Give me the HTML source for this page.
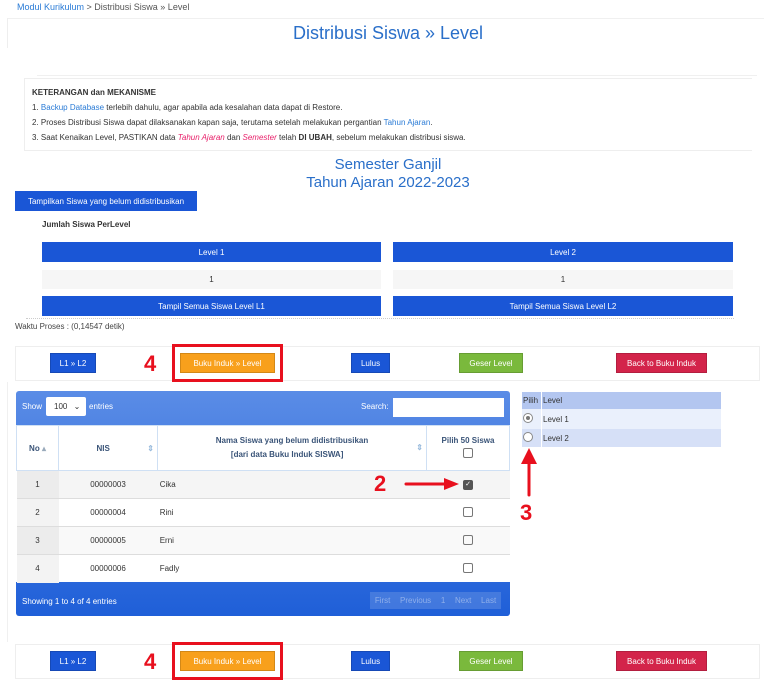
<!DOCTYPE html>
<html><head><meta charset="utf-8"><style>
*{margin:0;padding:0;box-sizing:border-box}
body{width:768px;height:681px;background:#fff;font-family:"Liberation Sans",sans-serif;position:relative;overflow:hidden;color:#333}
.a{position:absolute}
.c{display:flex;align-items:center;justify-content:center}
.bb{background:#1a56d6;color:#fff;font-size:8px}
.btn{position:absolute;color:#fff;font-size:8px;display:flex;align-items:center;justify-content:center;border:1px solid rgba(0,0,0,.15)}
.num{position:absolute;color:#e8101e;font-weight:bold;font-size:22px;font-family:"Liberation Sans",sans-serif}
.redbox{position:absolute;border:3px solid #e8101e}
td,th{font-size:8px}
</style></head><body>
<div class="a" style="left:8px;top:18px;width:756px;height:1px;background:#f0f0f0"></div>
<div class="a" style="left:7px;top:18px;width:1px;height:30px;background:#eee"></div>
<div class="a" style="left:17px;top:2px;font-size:9px;color:#555"><span style="color:#2a7bd6">Modul Kurikulum</span> &gt; Distribusi Siswa » Level</div>
<div class="a" style="left:0;width:776px;top:23px;text-align:center;font-size:18px;color:#2a6fc9">Distribusi Siswa » Level</div>
<div class="a" style="left:37px;top:75px;width:720px;height:1px;background:#f0f0f0"></div>
<div class="a" style="left:24px;top:78px;width:728px;height:73px;border:1px solid #eee;border-right:none"></div>
<div class="a" style="left:32px;top:85px;font-size:8px;line-height:15px;color:#333">
<b>KETERANGAN dan MEKANISME</b><br>
1. <span style="color:#2a7bd6">Backup Database</span> terlebih dahulu, agar apabila ada kesalahan data dapat di Restore.<br>
2. Proses Distribusi Siswa dapat dilaksanakan kapan saja, terutama setelah melakukan pergantian <span style="color:#2a7bd6">Tahun Ajaran</span>.<br>
3. Saat Kenaikan Level, PASTIKAN data <i style="color:#e8206a">Tahun Ajaran</i> dan <i style="color:#e8206a">Semester</i> telah <b>DI UBAH</b>, sebelum melakukan distribusi siswa.</div>
<div class="a" style="left:0;width:776px;top:156px;text-align:center;font-size:15px;line-height:18px;color:#2a6fc9">Semester Ganjil<br>Tahun Ajaran 2022-2023</div>
<div class="a c bb" style="left:15px;top:191px;width:182px;height:20px">Tampilkan Siswa yang belum didistribusikan</div>
<div class="a" style="left:42px;top:220px;font-size:8px;font-weight:bold">Jumlah Siswa PerLevel</div>
<div class="a c bb" style="left:42px;top:242px;width:339px;height:20px">Level 1</div>
<div class="a c bb" style="left:393px;top:242px;width:340px;height:20px">Level 2</div>
<div class="a c" style="left:42px;top:270px;width:339px;height:19px;background:#f6f6f6;font-size:8px">1</div>
<div class="a c" style="left:393px;top:270px;width:340px;height:19px;background:#f6f6f6;font-size:8px">1</div>
<div class="a c bb" style="left:42px;top:296px;width:339px;height:20px">Tampil Semua Siswa Level L1</div>
<div class="a c bb" style="left:393px;top:296px;width:340px;height:20px">Tampil Semua Siswa Level L2</div>
<div class="a" style="left:26px;top:318px;width:708px;height:1px;border-top:1px dotted #ccc"></div>
<div class="a" style="left:15px;top:322px;font-size:8px;color:#444">Waktu Proses : (0,14547 detik)</div>

<div class="a" style="left:15px;top:346px;width:745px;height:35px;border:1px solid #eee"></div>
<div class="btn" style="left:50px;top:353px;width:46px;height:20px;background:#1a56d6">L1 » L2</div>
<div class="num" style="left:144px;top:351px">4</div>
<div class="redbox" style="left:172px;top:344px;width:111px;height:38px"></div>
<div class="btn" style="left:180px;top:353px;width:95px;height:20px;background:#f8a01c">Buku Induk » Level</div>
<div class="btn" style="left:351px;top:353px;width:39px;height:20px;background:#1a56d6">Lulus</div>
<div class="btn" style="left:459px;top:353px;width:64px;height:20px;background:#7ab93c">Geser Level</div>
<div class="btn" style="left:616px;top:353px;width:91px;height:20px;background:#d3244a">Back to Buku Induk</div>

<div class="a" style="left:16px;top:391px;width:494px;height:225px;border-radius:3px;background:linear-gradient(#5a8ce6,#1f5fd8);overflow:hidden">
 <div class="a" style="left:6px;top:11px;font-size:8px;color:#fff">Show</div>
 <div class="a" style="left:30px;top:6px;width:40px;height:19px;background:#fff;border-radius:2px;font-size:8px;color:#333;padding:5px 0 0 8px">100 <span style="margin-left:4px">⌄</span></div>
 <div class="a" style="left:73px;top:11px;font-size:8px;color:#fff">entries</div>
 <div class="a" style="left:345px;top:11px;font-size:8px;color:#fff">Search:</div>
 <div class="a" style="left:377px;top:7px;width:111px;height:19px;background:#fff"></div>
 <div class="a" style="left:0;top:34px;width:494px;height:157px;background:#fff"></div>
 <div class="a" style="left:6px;top:206px;font-size:8px;color:#fff">Showing 1 to 4 of 4 entries</div>
 <div class="a" style="left:354px;top:201px;width:131px;height:17px;background:rgba(255,255,255,.15);font-size:8px;color:rgba(255,255,255,.4);display:flex;align-items:center;justify-content:space-around">First <span>Previous</span> 1 <span>Next</span> Last</div>
</div>
<table class="a" style="left:16px;top:425px;width:494px;border-collapse:collapse">
<tr style="height:45px;color:#3a5478;font-weight:bold">
<th style="width:42px;border:1px solid #cfe0f4;font-weight:bold">No <span style="color:#9ab">▴</span></th>
<th style="width:99px;border:1px solid #cfe0f4">NIS <span style="float:right;color:#9bd;margin-right:3px">⇕</span></th>
<th style="width:269px;border:1px solid #cfe0f4;line-height:14px">Nama Siswa yang belum didistribusikan<br>[dari data Buku Induk SISWA] <span style="float:right;color:#9bd;margin-right:3px;margin-top:-7px">⇕</span></th>
<th style="border:1px solid #cfe0f4;line-height:14px">Pilih 50 Siswa<br><span style="display:inline-block;width:10px;height:10px;border:1px solid #777;border-radius:2px"></span></th></tr>
<tr style="height:28px;background:#f5f5f5;border-bottom:1px solid #ddd"><td style="text-align:center;background:#ececec">1</td><td style="text-align:center">00000003</td><td>&nbsp;Cika</td><td style="text-align:center"><span style="display:inline-block;width:10px;height:10px;background:#555;border-radius:2px;color:#fff;font-size:7px;line-height:10px">✓</span></td></tr>
<tr style="height:28px;border-bottom:1px solid #ddd"><td style="text-align:center;background:#f3f3f3">2</td><td style="text-align:center">00000004</td><td>&nbsp;Rini</td><td style="text-align:center"><span style="display:inline-block;width:10px;height:10px;border:1px solid #777;border-radius:2px"></span></td></tr>
<tr style="height:28px;background:#f9f9f9;border-bottom:1px solid #ddd"><td style="text-align:center;background:#ececec">3</td><td style="text-align:center">00000005</td><td>&nbsp;Erni</td><td style="text-align:center"><span style="display:inline-block;width:10px;height:10px;border:1px solid #777;border-radius:2px"></span></td></tr>
<tr style="height:28px"><td style="text-align:center;background:#f3f3f3">4</td><td style="text-align:center">00000006</td><td>&nbsp;Fadly</td><td style="text-align:center"><span style="display:inline-block;width:10px;height:10px;border:1px solid #777;border-radius:2px"></span></td></tr>
</table>
<div class="num" style="left:374px;top:471px">2</div>
<svg class="a" style="left:404px;top:476px" width="56" height="16"><line x1="2" y1="8" x2="42" y2="8" stroke="#e8101e" stroke-width="3" stroke-linecap="round"/><polygon points="40,2 55,8 40,14" fill="#e8101e"/></svg>

<div class="a" style="left:522px;top:392px;width:199px;height:17px;background:#b3c6f0;font-size:8px;color:#333"><span class="a" style="left:1px;top:4px">Pilih</span><span class="a" style="left:21px;top:4px">Level</span></div>
<div class="a" style="left:522px;top:409px;width:199px;height:20px;background:#eaf0fc;font-size:8px"><span class="a" style="left:1px;top:4px;width:10px;height:10px;border:1px solid #888;border-radius:50%;background:#fff"><span class="a" style="left:2px;top:2px;width:4px;height:4px;border-radius:50%;background:#777"></span></span><span class="a" style="left:21px;top:6px">Level 1</span></div>
<div class="a" style="left:522px;top:429px;width:199px;height:18px;background:#d6e0f7;font-size:8px"><span class="a" style="left:1px;top:3px;width:10px;height:10px;border:1px solid #888;border-radius:50%;background:#fff"></span><span class="a" style="left:21px;top:5px">Level 2</span></div>
<div class="a" style="left:541px;top:392px;width:1px;height:55px;background:#fff"></div>
<svg class="a" style="left:520px;top:448px" width="18" height="50"><polygon points="9,0 17,16 1,16" fill="#e8101e"/><line x1="9" y1="14" x2="9" y2="47" stroke="#e8101e" stroke-width="3" stroke-linecap="round"/></svg>
<div class="num" style="left:520px;top:500px">3</div>

<div class="a" style="left:15px;top:644px;width:745px;height:35px;border:1px solid #eee"></div>
<div class="a" style="left:7px;top:382px;width:1px;height:260px;background:#f0f0f0"></div>
<div class="btn" style="left:50px;top:651px;width:46px;height:20px;background:#1a56d6">L1 » L2</div>
<div class="num" style="left:144px;top:649px">4</div>
<div class="redbox" style="left:172px;top:642px;width:111px;height:38px"></div>
<div class="btn" style="left:180px;top:651px;width:95px;height:20px;background:#f8a01c">Buku Induk » Level</div>
<div class="btn" style="left:351px;top:651px;width:39px;height:20px;background:#1a56d6">Lulus</div>
<div class="btn" style="left:459px;top:651px;width:64px;height:20px;background:#7ab93c">Geser Level</div>
<div class="btn" style="left:616px;top:651px;width:91px;height:20px;background:#d3244a">Back to Buku Induk</div>
</body></html>
